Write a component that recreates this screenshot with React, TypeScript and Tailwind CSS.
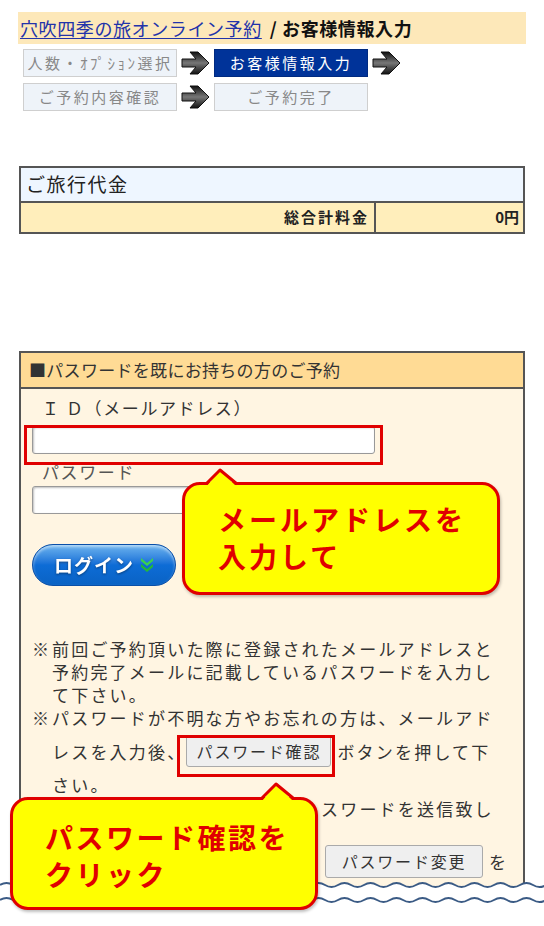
import React from 'react';

const jp = "font-['Noto_Sans_CJK_JP','Noto_Sans',sans-serif]";

function StepArrow() {
  return (
    <svg width="30" height="26" viewBox="0 0 30 26">
      <defs>
        <linearGradient id="arw" x1="0" y1="0" x2="0" y2="1">
          <stop offset="0" stopColor="#111" />
          <stop offset="0.5" stopColor="#777" />
          <stop offset="1" stopColor="#111" />
        </linearGradient>
      </defs>
      <polygon points="1,9 15,9 9,2 17,2 28,13 17,24 9,24 15,17 1,17" fill="url(#arw)" stroke="#111" strokeWidth="1" />
    </svg>
  );
}

function Step({ label, active }: { label: string; active?: boolean }) {
  return (
    <div
      className={`h-[28px] w-[154px] flex items-center justify-center text-[15px] tracking-[2.5px] border ${
        active ? 'bg-[#003399] border-[#002a80] text-white' : 'bg-[#eef3f9] border-[#cfcfcf] text-[#888]'
      }`}
    >
      {label}
    </div>
  );
}

function Tail({ left, top }: { left: number; top: number }) {
  return (
    <svg className="absolute" style={{ left, top }} width="38" height="20" viewBox="0 0 38 20">
      <polygon points="3,19 17,2 34,19" fill="#ffff00" />
      <polyline points="3,16 17,2 34,16" fill="none" stroke="#e00000" strokeWidth="3" strokeLinejoin="round" />
    </svg>
  );
}

function Wave() {
  const period = 26;
  let top = 'M0,9';
  let bottom = 'M0,24';
  for (let i = 0; i < 22; i++) {
    top += ` q${period / 4},-4 ${period / 2},0 q${period / 4},4 ${period / 2},0`;
    bottom += ` q${period / 4},-4 ${period / 2},0 q${period / 4},4 ${period / 2},0`;
  }
  return (
    <svg className="absolute left-0 top-[876px]" width="544" height="50" viewBox="0 0 544 50">
      <path d={`${top} L544,50 L0,50 Z`} fill="#ffffff" />
      <path d={top} fill="none" stroke="#3b5b85" strokeWidth="2" />
      <path d={bottom} fill="none" stroke="#3b5b85" strokeWidth="2" />
    </svg>
  );
}

export default function App() {
  return (
    <div className={`relative w-[544px] h-[926px] overflow-hidden bg-white text-[#333] ${jp}`}>
      {/* Title band */}
      <div className="mt-[12px] ml-[18px] w-[508px] h-[32px] bg-[#fde8b9] flex items-center pl-[2px] text-[18px] tracking-[0.6px] whitespace-nowrap">
        <span className="text-[#2233aa] underline underline-offset-2">穴吹四季の旅オンライン予約</span>
        <span className="font-bold text-[#111] ml-[8px]">/ お客様情報入力</span>
      </div>

      {/* Steps */}
      <div className="ml-[23px] mt-[5px] grid grid-cols-[154px_37px_154px_37px] gap-y-[6px] items-center">
        <Step label="人数・ｵﾌﾟｼｮﾝ選択" />
        <div className="flex justify-center"><StepArrow /></div>
        <Step label="お客様情報入力" active />
        <div className="flex justify-center"><StepArrow /></div>
        <Step label="ご予約内容確認" />
        <div className="flex justify-center"><StepArrow /></div>
        <Step label="ご予約完了" />
      </div>

      {/* Travel cost */}
      <div className="mt-[55px] ml-[19px] w-[506px] border-2 border-[#555]">
        <div className="h-[35px] bg-[#eef6ff] border-b-2 border-[#555] flex items-center pl-[5px] text-[19px] tracking-[1.5px] text-[#222]">
          ご旅行代金
        </div>
        <div className="h-[29px] bg-[#ffeebb] flex text-[15px] font-bold text-[#222]">
          <div className="w-[355px] border-r-2 border-[#555] flex items-center justify-end pr-[5px] tracking-[2px]">総合計料金</div>
          <div className="flex-1 flex items-center justify-end pr-[4px]">0円</div>
        </div>
      </div>

      {/* Login box */}
      <div className="mt-[117px] ml-[19px] w-[506px] border-2 border-[#555]">
        <div className="h-[36px] bg-[#ffdb95] border-b-2 border-[#555] flex items-center pl-[8px] text-[17px] tracking-[0.3px] text-[#333]">
          ■パスワードを既にお持ちの方のご予約
        </div>
        <div className="bg-[#fff5e2] pl-[11px] pb-[40px] text-[17px] tracking-[2.2px] text-[#333]">
          <div className="pt-[9px] h-[29px] leading-[20px] pl-[10px] tracking-[1.6px]">Ｉ Ｄ（メールアドレス）</div>
          <div className="mt-[8px] w-[343px] h-[28px] bg-white border border-[#999] rounded-[3px] shadow-[inset_1px_1px_2px_rgba(0,0,0,0.25)]" />
          <div className="mt-[8px] h-[20px] leading-[20px] pl-[10px] tracking-[1.6px] text-[#555]">パスワード</div>
          <div className="mt-[4px] w-[343px] h-[28px] bg-white border border-[#999] rounded-[3px] shadow-[inset_1px_1px_2px_rgba(0,0,0,0.25)]" />
          <button className="mt-[30px] w-[144px] h-[42px] rounded-full border border-[#0a4fa8] bg-linear-to-b from-[#6cb4ee] via-[#0d6cd6] to-[#0a62c4] flex items-center justify-center gap-[6px] shadow-[inset_0_2px_3px_rgba(255,255,255,0.5)]">
            <span className="text-white font-bold text-[19px] tracking-[1px] drop-shadow-[0_1px_1px_rgba(0,0,0,0.4)]">ログイン</span>
            <svg width="14" height="18" viewBox="0 0 14 18">
              <polygon points="1,2 7,7 13,2 13,5 7,10 1,5" fill="#3ad14f" />
              <polygon points="1,8 7,13 13,8 13,11 7,16 1,11" fill="#24b83a" />
            </svg>
          </button>

          <div className="mt-[51px] leading-[23px] whitespace-nowrap">
            <div className="flex"><span className="w-[20px] tracking-normal">※</span><span>前回ご予約頂いた際に登録されたメールアドレスと</span></div>
            <div className="pl-[20px]">予約完了メールに記載しているパスワードを入力し</div>
            <div className="pl-[20px]">て下さい。</div>
            <div className="flex"><span className="w-[20px] tracking-normal">※</span><span>パスワードが不明な方やお忘れの方は、メールアド</span></div>
            <div className="pl-[20px] h-[44px] flex items-center">
              <span>レスを入力後、</span>
              <span className="h-[32px] w-[145px] flex items-center justify-center bg-[#efefef] border border-[#aaa] rounded-[3px] text-[16px] tracking-[1.8px] text-[#333]">パスワード確認</span>
              <span className="ml-[6px]">ボタンを押して下</span>
            </div>
            <div className="pl-[20px]">さい。</div>
            {/* the start of the next lines is hidden under the callout */}
            <div className="flex mt-[1px] pl-[289px]"><span>スワードを送信致し</span></div>
            <div className="h-[23px]" />
            <div className="flex items-center h-[37px] pl-[293px]">
              <span className="h-[33px] w-[158px] flex items-center justify-center bg-[#efefef] border border-[#aaa] rounded-[3px] text-[16px] tracking-[1.8px] text-[#333]">パスワード変更</span>
              <span className="ml-[6px]">を</span>
            </div>
          </div>
        </div>
      </div>

      {/* Highlights */}
      <div className="absolute left-[24px] top-[425px] w-[359px] h-[40px] border-[3px] border-[#e00000]" />
      <div className="absolute left-[177px] top-[735px] w-[158px] h-[42px] border-[3px] border-[#e00000]" />

      <Wave />

      {/* Callout 1 */}
      <div className="absolute left-[182px] top-[482px] w-[318px] h-[113px] bg-[#ffff00] border-[3px] border-[#e00000] rounded-[18px] shadow-[1px_2px_3px_rgba(0,0,0,0.25)] pl-[33px] pt-[16px] text-[28px] leading-[37px] tracking-[3px] font-bold text-[#e00000]">
        <div>メールアドレスを</div>
        <div>入力して</div>
      </div>
      <Tail left={203} top={468} />

      {/* Callout 2 */}
      <div className="absolute left-[10px] top-[797px] w-[308px] h-[113px] bg-[#ffff00] border-[3px] border-[#e00000] rounded-[18px] shadow-[1px_2px_3px_rgba(0,0,0,0.25)] pl-[32px] pt-[19px] text-[28px] leading-[37px] tracking-[2.5px] font-bold text-[#e00000]">
        <div>パスワード確認を</div>
        <div>クリック</div>
      </div>
      <Tail left={259} top={782} />
    </div>
  );
}
